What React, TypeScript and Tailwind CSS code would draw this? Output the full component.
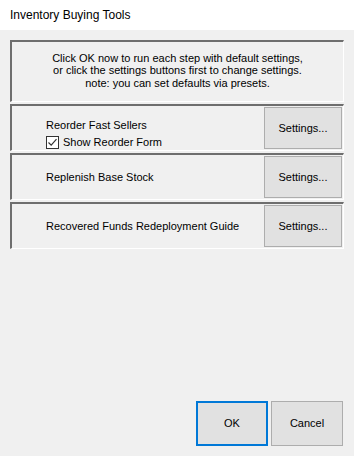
export default function App() {
  const panel =
    "flex items-center border-t-2 border-l-2 border-b border-r border-t-[#6e6e6e] border-l-[#6e6e6e] border-b-white border-r-white";

  const settingsBtn =
    "w-[78px] h-[42px] shrink-0 bg-[#e1e1e1] border border-[#adadad] text-[11px] text-black";

  return (
    <div
      className="w-[354px] h-[456px] bg-[#f0f0f0] flex flex-col text-black"
      style={{ fontFamily: '"Liberation Sans", Arial, sans-serif' }}
    >
      {/* title bar */}
      <div className="h-[30px] bg-white flex items-center pl-[10px] text-[12px]">
        Inventory Buying Tools
      </div>

      <div className="flex flex-col gap-[2px] pt-[10px] pl-[10px] pr-[10px]">
        <div className={`${panel} h-[62px] justify-center`}>
          <p className="text-center text-[11px] leading-[12.5px] pb-[2px]">
            Click OK now to run each step with default settings,
            <br />
            or click the settings buttons first to change settings.
            <br />
            note: you can set defaults via presets.
          </p>
        </div>

        <div className={`${panel} h-[47px] pr-[1px]`}>
          <div className="flex-1 self-start pl-[34px] flex flex-col text-[11px] leading-[13px] gap-[4px] pt-[13px]">
            <span>Reorder Fast Sellers</span>
            <label className="flex items-center gap-[4px]">
              <span className="w-[13px] h-[13px] border border-[#333] bg-white flex items-center justify-center">
                <svg width="11" height="11" viewBox="0 0 11 11">
                  <path d="M1.5 5.5 L4.2 8.2 L9.5 2.2" fill="none" stroke="#333" strokeWidth="1.2" />
                </svg>
              </span>
              Show Reorder Form
            </label>
          </div>
          <button className={settingsBtn}>Settings...</button>
        </div>

        <div className={`${panel} h-[47px] pr-[1px]`}>
          <div className="flex-1 pl-[34px] text-[11px]">Replenish Base Stock</div>
          <button className={settingsBtn}>Settings...</button>
        </div>

        <div className={`${panel} h-[47px] pr-[1px]`}>
          <div className="flex-1 pl-[34px] text-[11px]">Recovered Funds Redeployment Guide</div>
          <button className={settingsBtn}>Settings...</button>
        </div>
      </div>

      <div className="flex-1" />

      <div className="flex justify-end gap-[3px] pr-[11px] pb-[10px]">
        <button className="w-[72px] h-[45px] bg-[#e1e1e1] border-2 border-[#0078d7] text-[11px]">
          OK
        </button>
        <button className="w-[72px] h-[45px] bg-[#e1e1e1] border border-[#adadad] text-[11px]">
          Cancel
        </button>
      </div>
    </div>
  );
}
